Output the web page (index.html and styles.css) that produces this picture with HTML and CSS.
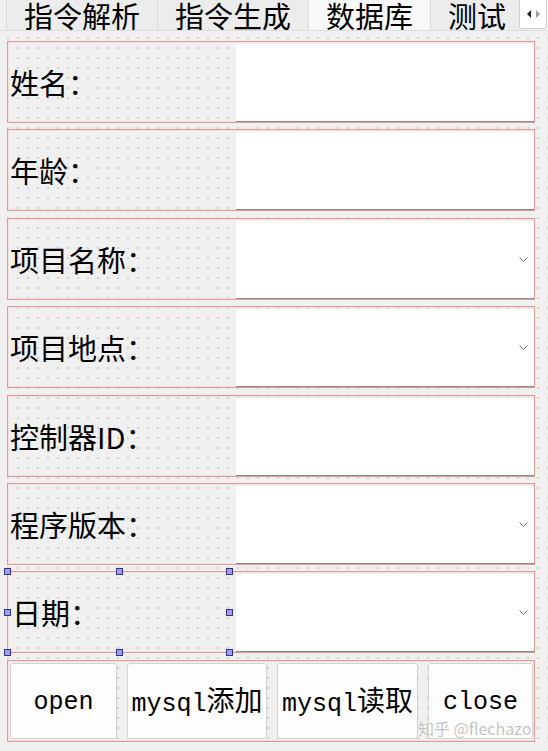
FILE: index.html
```html
<!DOCTYPE html>
<html lang="zh-CN">
<head>
  <meta charset="UTF-8">
  <title>数据库</title>
  <link rel="stylesheet" href="styles.css">
</head>
<body>
  <div class="tabs">
    <div class="tab">指令解析</div>
    <div class="tab">指令生成</div>
    <div class="tab current">数据库</div>
    <div class="tab">测试</div>
    <div class="tab-scroll">
      <span class="arrow left"></span>
      <span class="arrow right"></span>
    </div>
  </div>

  <div class="form">
    <div class="row">
      <div class="label">姓名：</div>
      <div class="field"></div>
    </div>
    <div class="row">
      <div class="label">年龄：</div>
      <div class="field"></div>
    </div>
    <div class="row">
      <div class="label">项目名称：</div>
      <div class="field combo"><svg class="chev" width="9" height="5" viewBox="0 0 9 5"><polyline points="0.5,0.5 4.5,4.5 8.5,0.5"/></svg></div>
    </div>
    <div class="row">
      <div class="label">项目地点：</div>
      <div class="field combo"><svg class="chev" width="9" height="5" viewBox="0 0 9 5"><polyline points="0.5,0.5 4.5,4.5 8.5,0.5"/></svg></div>
    </div>
    <div class="row">
      <div class="label">控制器ID：</div>
      <div class="field"></div>
    </div>
    <div class="row">
      <div class="label">程序版本：</div>
      <div class="field combo"><svg class="chev" width="9" height="5" viewBox="0 0 9 5"><polyline points="0.5,0.5 4.5,4.5 8.5,0.5"/></svg></div>
    </div>
    <div class="row">
      <div class="label selected">日期：
        <div class="handles">
          <span class="h tl"></span><span class="h tm"></span><span class="h tr"></span>
          <span class="h ml"></span><span class="h mr"></span>
          <span class="h bl"></span><span class="h bm"></span><span class="h br"></span>
        </div>
      </div>
      <div class="field combo"><svg class="chev" width="9" height="5" viewBox="0 0 9 5"><polyline points="0.5,0.5 4.5,4.5 8.5,0.5"/></svg></div>
    </div>
    <div class="row buttons">
      <button class="btn">open</button>
      <button class="btn">mysql<span class="cjk">添加</span></button>
      <button class="btn">mysql<span class="cjk">读取</span></button>
      <button class="btn">close</button>
    </div>
  </div>

  <span class="watermark">知乎 @flechazo</span>
</body>
</html>
```

FILE: styles.css
```css
body {
  margin: 0;
  width: 548px;
  height: 751px;
  overflow: hidden;
  position: relative;
  background: #f0f0f0;
  font-family: "Noto Sans CJK SC", "Liberation Sans", sans-serif;
  color: #000;
}

/* tab bar */
.tabs {
  position: relative;
  display: flex;
  height: 30px;
  padding-left: 7px;
  overflow: hidden;
  border-bottom: 1px solid #dcdcdc;
}

.tab {
  flex: none;
  padding: 0 17px;
  font-size: 29px;
  line-height: 30px;
  background: #ececec;
  border-left: 1px solid #dadada;
  border-right: 1px solid #dadada;
  margin-left: -1px;
}

.tab.current {
  background: #f8f8f8;
}

.tab-scroll {
  position: absolute;
  right: 1px;
  top: -2px;
  width: 26px;
  height: 29px;
  background: #fff;
  border: 1px solid #d0d0d0;
  border-radius: 0 0 3px 3px;
  display: flex;
  align-items: center;
  justify-content: center;
  gap: 5px;
}

.arrow {
  width: 0;
  height: 0;
  border-top: 4px solid transparent;
  border-bottom: 4px solid transparent;
}

.arrow.left {
  border-right: 4px solid #222;
}

.arrow.right {
  border-left: 4px solid #9a9a9a;
}

/* designer canvas */
.form {
  display: flex;
  flex-direction: column;
  gap: 6.4px;
  padding: 10px 13px 0 7px;
  height: 714px;
  box-sizing: border-box;
  background-color: #f0f0f0;
  background-image: radial-gradient(circle, #c6c6c6 0.6px, transparent 1px);
  background-size: 10px 10px;
  background-position: 3px 2px;
}

.row {
  display: grid;
  grid-template-columns: 228px 1fr;
  height: 82px;
  box-sizing: border-box;
  border: 1px solid #e09a9a;
  box-shadow: inset 0 0 0 1px #f7dfdf;
}

.label {
  position: relative;
  display: flex;
  align-items: center;
  padding-left: 2px;
  font-size: 29px;
}

.field {
  margin-top: 2px;
  background: #fff;
  border-bottom: 1px solid #8c8c8c;
}

.field.combo {
  display: flex;
  align-items: center;
  justify-content: flex-end;
  padding-right: 6px;
}

.chev polyline {
  fill: none;
  stroke: #707070;
  stroke-width: 1;
}

/* selection handles */
.label.selected {
  padding-left: 4px;
}

.handles {
  position: absolute;
  left: 0;
  top: 0;
  right: 7px;
  bottom: 0;
}

.h {
  position: absolute;
  width: 5px;
  height: 5px;
  background: #9f9fe6;
  border: 1px solid #33338c;
}

.tl, .ml, .bl { left: -4px; }
.tm, .bm { left: calc(50% - 3px); }
.tr, .mr, .br { right: -4px; }
.tl, .tm, .tr { top: -4px; }
.ml, .mr { top: calc(50% - 3px); }
.bl, .bm, .br { bottom: -4px; }

/* button row */
.row.buttons {
  grid-template-columns: 107px 140px 141px 1fr;
  gap: 10px;
  padding: 2px 1px 2px 2px;
}

.btn {
  background: #fdfdfd;
  border: 1px solid #d3d3d3;
  border-radius: 3px;
  padding: 4px 0 0;
  font-family: "Liberation Mono", "Noto Sans CJK SC", monospace;
  font-size: 25px;
  line-height: 30px;
  color: #000;
  white-space: nowrap;
}

.btn .cjk {
  font-family: "Noto Sans CJK SC", sans-serif;
  font-size: 28px;
  line-height: 1;
}

.watermark {
  position: absolute;
  left: 418px;
  top: 716px;
  font-size: 16px;
  color: rgba(185, 185, 185, 0.85);
  text-shadow: 0 0 2px #fff;
}
```
